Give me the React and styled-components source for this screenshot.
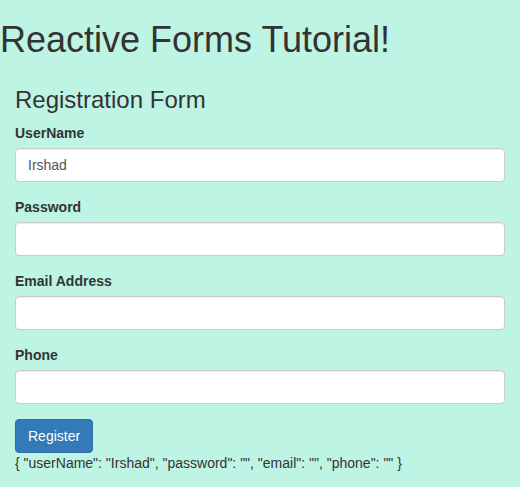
import React, { useState } from "react";
import styled, { createGlobalStyle } from "styled-components";

const GlobalStyle = createGlobalStyle`
  * { box-sizing: border-box; }
  html, body {
    margin: 0;
    background: #bef4e3;
  }
  body {
    font-family: "Liberation Sans", Arial, Helvetica, sans-serif;
    font-size: 14px;
    line-height: 1.42857143;
    color: #333;
  }
`;

const Page = styled.div`
  width: 520px;
  padding-top: 20px;
`;

const Title = styled.h1`
  margin: 0 0 27px;
  font-size: 36px;
  font-weight: 500;
  line-height: 1.1;
`;

const FormContainer = styled.div`
  padding: 0 15px;
`;

const FormTitle = styled.h3`
  margin: 0 0 10px;
  font-size: 24px;
  font-weight: 500;
  line-height: 1.1;
`;

const FormGroup = styled.div`
  margin-bottom: 15px;
`;

const Label = styled.label`
  display: inline-block;
  max-width: 100%;
  margin-bottom: 5px;
  font-weight: 700;
`;

const Input = styled.input`
  display: block;
  width: 100%;
  height: 34px;
  padding: 6px 12px;
  font-family: inherit;
  font-size: 14px;
  line-height: 1.42857143;
  color: #555;
  background: #fff;
  border: 1px solid #ccc;
  border-radius: 4px;
  box-shadow: inset 0 1px 1px rgba(0, 0, 0, 0.075);
  outline: none;
`;

const Button = styled.button`
  display: inline-block;
  padding: 6px 12px;
  font-family: inherit;
  font-size: 14px;
  line-height: 1.42857143;
  color: #fff;
  background: #337ab7;
  border: 1px solid #2e6da4;
  border-radius: 4px;
  cursor: pointer;
`;

const Output = styled.p`
  margin: 0;
`;

const fields = [
  { name: "userName", label: "UserName", type: "text" },
  { name: "password", label: "Password", type: "password" },
  { name: "email", label: "Email Address", type: "email" },
  { name: "phone", label: "Phone", type: "text" },
];

export default function App() {
  const [values, setValues] = useState({
    userName: "Irshad",
    password: "",
    email: "",
    phone: "",
  });

  const json =
    "{ " +
    Object.entries(values)
      .map(([k, v]) => `"${k}": "${v}"`)
      .join(", ") +
    " }";

  return (
    <Page>
      <GlobalStyle />
      <Title>Reactive Forms Tutorial!</Title>
      <FormContainer>
        <FormTitle>Registration Form</FormTitle>
        <form onSubmit={(e) => e.preventDefault()}>
          {fields.map((f) => (
            <FormGroup key={f.name}>
              <Label htmlFor={f.name}>{f.label}</Label>
              <Input
                id={f.name}
                type={f.type}
                value={values[f.name]}
                onChange={(e) =>
                  setValues({ ...values, [f.name]: e.target.value })
                }
              />
            </FormGroup>
          ))}
          <Button type="submit">Register</Button>
        </form>
        <Output>{json}</Output>
      </FormContainer>
    </Page>
  );
}
